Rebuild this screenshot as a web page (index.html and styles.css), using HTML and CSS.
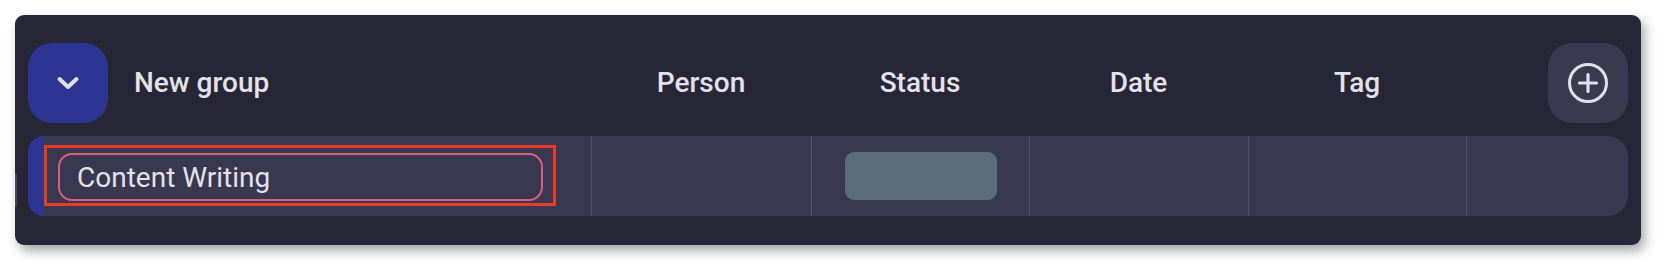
FILE: index.html
```html
<!DOCTYPE html>
<html lang="en">
<head>
<meta charset="utf-8">
<title>Group</title>
<link rel="stylesheet" href="styles.css">
</head>
<body>
<div class="card">
  <span class="handle"></span>
  <div class="head">
    <div class="head-first">
      <button class="toggle" type="button" aria-label="Collapse">
        <svg width="24" height="24" viewBox="0 0 24 24"><path d="M3.5 8 L12 16 L20.5 8" fill="none" stroke="#e1dfec" stroke-width="4" stroke-linecap="round" stroke-linejoin="round"/></svg>
      </button>
      <span class="group-name">New group</span>
    </div>
    <div class="col-title">Person</div>
    <div class="col-title">Status</div>
    <div class="col-title">Date</div>
    <div class="col-title">Tag</div>
    <div class="head-last">
      <button class="add" type="button" aria-label="Add column">
        <svg width="42" height="42" viewBox="0 0 42 42"><circle cx="21" cy="21" r="18.5" fill="none" stroke="#e1dfec" stroke-width="3"/><path d="M21 12.5 V29.5 M12.5 21 H29.5" stroke="#e1dfec" stroke-width="3.2" stroke-linecap="round"/></svg>
      </button>
    </div>
  </div>
  <div class="row">
    <div class="row-first">
      <span class="strip"></span>
      <div class="focus">
        <div class="name-input">Content Writing</div>
      </div>
    </div>
    <div class="cell"></div>
    <div class="cell status-cell"><span class="status-pill"></span></div>
    <div class="cell"></div>
    <div class="cell"></div>
    <div class="cell"></div>
  </div>
</div>
</body>
</html>
```
FILE: styles.css
```css
html, body {
  margin: 0;
  padding: 0;
  background: #ffffff;
}
body {
  padding: 15px;
  font-family: Roboto, "Liberation Sans", sans-serif;
}
.card {
  position: relative;
  width: 1626px;
  height: 230px;
  box-sizing: border-box;
  padding: 28px 13px 0 13px;
  background: #272637;
  border-radius: 9px;
  box-shadow: 4px 6px 12px rgba(0, 0, 0, 0.35);
}
.handle {
  position: absolute;
  left: 0;
  top: 158px;
  width: 2px;
  height: 34px;
  background: #47465a;
  border-radius: 0 2px 2px 0;
}
.head, .row {
  display: grid;
  grid-template-columns: 563px 220px 218px 219px 218px 1fr;
}
.head {
  height: 80px;
  margin-bottom: 13px;
  align-items: center;
}
.head-first {
  display: flex;
  align-items: center;
  gap: 26px;
  height: 80px;
}
.toggle, .add {
  width: 80px;
  height: 80px;
  border: 0;
  padding: 0;
  border-radius: 24px;
  display: flex;
  align-items: center;
  justify-content: center;
  cursor: pointer;
}
.toggle {
  background: #2c3591;
}
.add {
  background: #3a3950;
}
.group-name, .col-title {
  color: #e3e1ea;
  font-size: 28px;
  font-weight: 500;
  margin-top: -2px;
}
.col-title {
  text-align: center;
}
.head-last {
  display: flex;
  justify-content: flex-end;
}
.row {
  height: 80px;
  background: #393850;
  border-radius: 16px 20px 20px 16px;
  overflow: hidden;
}
.row-first {
  display: flex;
  align-items: center;
}
.strip {
  width: 15px;
  align-self: stretch;
  background: #2c3591;
  border-radius: 16px 0 0 16px;
}
.focus {
  box-sizing: border-box;
  width: 512px;
  height: 61px;
  margin-left: 1px;
  padding: 5px 10px 3px 11px;
  border: 3px solid #e73c2a;
  align-self: center;
  margin-top: -1px;
}
.name-input {
  box-sizing: border-box;
  height: 48px;
  border: 2px solid #d8607e;
  border-radius: 14px;
  padding-left: 17px;
  display: flex;
  align-items: center;
  color: #e3e1ea;
  font-size: 28px;
  font-weight: 400;
}
.cell {
  border-left: 1px solid #56546c;
  display: flex;
  align-items: center;
  justify-content: center;
}
.status-pill {
  width: 152px;
  height: 48px;
  border-radius: 9px;
  background: #5a6d79;
}
```
